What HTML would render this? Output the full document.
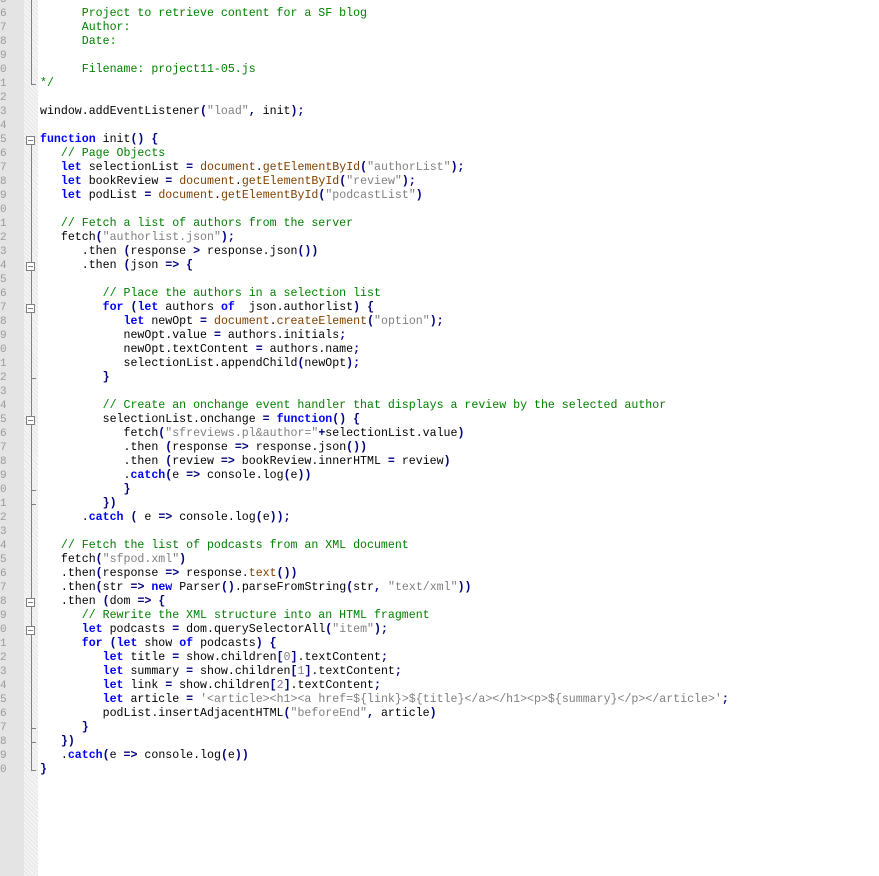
<!DOCTYPE html>
<html><head><meta charset="utf-8"><style>
html,body{margin:0;padding:0;background:#fff;width:879px;height:876px;overflow:hidden;position:relative}
#num{position:absolute;left:0;top:0;width:24px;height:876px;background:#e4e4e4}
#fold{position:absolute;left:24px;top:0;width:14px;height:876px;background-color:#f4f4f4;background-image:repeating-linear-gradient(45deg,#e6e6e6 0 1px,transparent 1px 3px)}
.ln{position:absolute;left:0;width:6px;text-align:right;font:11px "Liberation Mono",monospace;color:#9a9a9a;line-height:14px}
pre{position:absolute;left:40px;top:-7px;margin:0;font-family:"Liberation Mono",monospace;font-size:11.6px;line-height:14px;color:#000}
.k{color:#0000ff;font-weight:bold}.o{color:#000080;font-weight:bold}.s{color:#808080}.c{color:#008000}.d{color:#804000}
.vl{position:absolute;left:31px;width:1px;background:#808080}
.bx{position:absolute;left:26px;width:9px;height:9px;border:1px solid #808080;background:#fff;box-sizing:border-box}
.bx:after{content:"";position:absolute;left:1px;top:3px;width:5px;height:1px;background:#808080}
.tk{position:absolute;left:31px;width:5px;height:1px;background:#808080}
</style></head><body>
<div id="num"></div><div id="fold"></div>
<div class="vl" style="top:0;height:84px"></div><div class="tk" style="top:84px"></div>
<div class="vl" style="top:145px;height:625px"></div><div class="tk" style="top:770px"></div>
<div class="bx" style="top:136px"></div>
<div class="bx" style="top:262px"></div>
<div class="bx" style="top:304px"></div>
<div class="bx" style="top:416px"></div>
<div class="bx" style="top:598px"></div>
<div class="bx" style="top:626px"></div>
<div class="tk" style="top:378px"></div>
<div class="tk" style="top:490px"></div>
<div class="tk" style="top:504px"></div>
<div class="tk" style="top:728px"></div>
<div class="tk" style="top:742px"></div>
<pre>

<span class="c">      Project to retrieve content for a SF blog</span>
<span class="c">      Author:</span>
<span class="c">      Date:</span>

<span class="c">      Filename: project11-05.js</span>
<span class="c">*/</span>

window.addEventListener<span class="o">(</span><span class="s">"load"</span><span class="o">,</span> init<span class="o">);</span>

<span class="k">function</span> init<span class="o">()</span> <span class="o">{</span>
   <span class="c">// Page Objects</span>
   <span class="k">let</span> selectionList <span class="o">=</span> <span class="d">document</span>.<span class="d">getElementById</span><span class="o">(</span><span class="s">"authorList"</span><span class="o">);</span>
   <span class="k">let</span> bookReview <span class="o">=</span> <span class="d">document</span>.<span class="d">getElementById</span><span class="o">(</span><span class="s">"review"</span><span class="o">);</span>
   <span class="k">let</span> podList <span class="o">=</span> <span class="d">document</span>.<span class="d">getElementById</span><span class="o">(</span><span class="s">"podcastList"</span><span class="o">)</span>

   <span class="c">// Fetch a list of authors from the server</span>
   fetch<span class="o">(</span><span class="s">"authorlist.json"</span><span class="o">);</span>
      .then <span class="o">(</span>response <span class="o">&gt;</span> response.json<span class="o">())</span>
      .then <span class="o">(</span>json <span class="o">=&gt;</span> <span class="o">{</span>

         <span class="c">// Place the authors in a selection list</span>
         <span class="k">for</span> <span class="o">(</span><span class="k">let</span> authors <span class="k">of</span>  json.authorlist<span class="o">)</span> <span class="o">{</span>
            <span class="k">let</span> newOpt <span class="o">=</span> <span class="d">document</span>.<span class="d">createElement</span><span class="o">(</span><span class="s">"option"</span><span class="o">);</span>
            newOpt.value <span class="o">=</span> authors.initials<span class="o">;</span>
            newOpt.textContent <span class="o">=</span> authors.name<span class="o">;</span>
            selectionList.appendChild<span class="o">(</span>newOpt<span class="o">);</span>
         <span class="o">}</span>

         <span class="c">// Create an onchange event handler that displays a review by the selected author</span>
         selectionList.onchange <span class="o">=</span> <span class="k">function</span><span class="o">()</span> <span class="o">{</span>
            fetch<span class="o">(</span><span class="s">"sfreviews.pl&amp;author="</span><span class="o">+</span>selectionList.value<span class="o">)</span>
            .then <span class="o">(</span>response <span class="o">=&gt;</span> response.json<span class="o">())</span>
            .then <span class="o">(</span>review <span class="o">=&gt;</span> bookReview.innerHTML <span class="o">=</span> review<span class="o">)</span>
            .<span class="k">catch</span><span class="o">(</span>e <span class="o">=&gt;</span> console.log<span class="o">(</span>e<span class="o">))</span>
            <span class="o">}</span>
         <span class="o">})</span>
      .<span class="k">catch</span> <span class="o">(</span> e <span class="o">=&gt;</span> console.log<span class="o">(</span>e<span class="o">));</span>

   <span class="c">// Fetch the list of podcasts from an XML document</span>
   fetch<span class="o">(</span><span class="s">"sfpod.xml"</span><span class="o">)</span>
   .then<span class="o">(</span>response <span class="o">=&gt;</span> response.<span class="d">text</span><span class="o">())</span>
   .then<span class="o">(</span>str <span class="o">=&gt;</span> <span class="k">new</span> Parser<span class="o">()</span>.parseFromString<span class="o">(</span>str<span class="o">,</span> <span class="s">"text/xml"</span><span class="o">))</span>
   .then <span class="o">(</span>dom <span class="o">=&gt;</span> <span class="o">{</span>
      <span class="c">// Rewrite the XML structure into an HTML fragment</span>
      <span class="k">let</span> podcasts <span class="o">=</span> dom.querySelectorAll<span class="o">(</span><span class="s">"item"</span><span class="o">);</span>
      <span class="k">for</span> <span class="o">(</span><span class="k">let</span> show <span class="k">of</span> podcasts<span class="o">)</span> <span class="o">{</span>
         <span class="k">let</span> title <span class="o">=</span> show.children<span class="o">[</span><span class="s">0</span><span class="o">]</span>.textContent<span class="o">;</span>
         <span class="k">let</span> summary <span class="o">=</span> show.children<span class="o">[</span><span class="s">1</span><span class="o">]</span>.textContent<span class="o">;</span>
         <span class="k">let</span> link <span class="o">=</span> show.children<span class="o">[</span><span class="s">2</span><span class="o">]</span>.textContent<span class="o">;</span>
         <span class="k">let</span> article <span class="o">=</span> <span class="s">'&lt;article&gt;&lt;h1&gt;&lt;a href=${link}&gt;${title}&lt;/a&gt;&lt;/h1&gt;&lt;p&gt;${summary}&lt;/p&gt;&lt;/article&gt;'</span><span class="o">;</span>
         podList.insertAdjacentHTML<span class="o">(</span><span class="s">"beforeEnd"</span><span class="o">,</span> article<span class="o">)</span>
      <span class="o">}</span>
   <span class="o">})</span>
   .<span class="k">catch</span><span class="o">(</span>e <span class="o">=&gt;</span> console.log<span class="o">(</span>e<span class="o">))</span>
<span class="o">}</span>
</pre>
<div style="position:absolute;left:0;top:-7px">
<div class="ln" style="position:static">5<br>6<br>7<br>8<br>9<br>0<br>1<br>2<br>3<br>4<br>5<br>6<br>7<br>8<br>9<br>0<br>1<br>2<br>3<br>4<br>5<br>6<br>7<br>8<br>9<br>0<br>1<br>2<br>3<br>4<br>5<br>6<br>7<br>8<br>9<br>0<br>1<br>2<br>3<br>4<br>5<br>6<br>7<br>8<br>9<br>0<br>1<br>2<br>3<br>4<br>5<br>6<br>7<br>8<br>9<br>0</div>
</div>
</body></html>
